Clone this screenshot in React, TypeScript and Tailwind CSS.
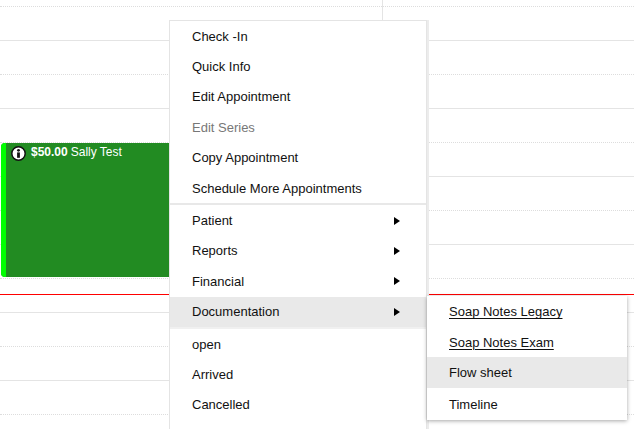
import React from "react";

const GridColumn = ({ className }: { className: string }) => (
  <div className={className}>
    <div className="h-[7px] border-b border-dotted border-[#dddddd]" />
    {Array.from({ length: 6 }).map((_, i) => (
      <React.Fragment key={i}>
        <div className="h-[34px] border-b border-[#e4e4e4]" />
        <div className="h-[34px] border-b border-dotted border-[#dddddd]" />
      </React.Fragment>
    ))}
  </div>
);

const Arrow = () => (
  <span className="h-0 w-0 border-y-[4px] border-l-[6px] border-y-transparent border-l-black" />
);

const Item = ({
  label,
  arrow,
  active,
  muted,
  underline,
  className = "h-[30.4px]",
}: {
  label: string;
  arrow?: boolean;
  active?: boolean;
  muted?: boolean;
  underline?: boolean;
  className?: string;
}) => (
  <div
    className={`flex items-center justify-between pl-[22px] pr-[26px] ${
      active ? "bg-[#e9e9e9]" : ""
    } ${muted ? "text-[#777777]" : "text-[#111111]"} ${className}`}
  >
    <span className={underline ? "underline underline-offset-2" : ""}>{label}</span>
    {arrow && <Arrow />}
  </div>
);

export default function App() {
  return (
    <div className="relative h-[429px] w-[634px] overflow-hidden bg-white font-['Liberation_Sans',Arial,sans-serif] text-[13px]">
      <div className="flex">
        <GridColumn className="w-[383px] border-r border-[#e4e4e4]" />
        <GridColumn className="flex-1" />
      </div>

      <div className="absolute left-0 top-[294px] h-[1px] w-full bg-[#ff0000]" />

      <div className="absolute left-[1px] top-[143px] flex h-[134px] w-[169px] overflow-hidden rounded-l-[4px] bg-[#228b22] text-[12px] leading-[14px] text-white">
        <div className="h-full w-[5px] bg-[#00ff00]" />
        <div className="flex h-[18px] items-center pl-[5px]">
          <svg width="15" height="15" viewBox="0 0 15 15" className="mt-[3px] shrink-0">
            <circle cx="7.5" cy="7.5" r="6.7" fill="#ffffff" stroke="#111111" strokeWidth="1.5" />
            <circle cx="7.5" cy="4.3" r="1.4" fill="#111111" />
            <rect x="6.1" y="6.4" width="2.8" height="5.4" fill="#111111" />
          </svg>
          <span className="ml-[5px] font-bold">$50.00</span>
          <span className="ml-[3px]">Sally Test</span>
        </div>
      </div>

      <div className="absolute left-[169px] top-[20px] h-[420px] w-[258px] border border-[#e4e4e4] bg-white shadow-[2px_0_0_#ececec]">
        <Item label="Check -In" className="h-[30.4px] pt-[1px]" />
        <Item label="Quick Info" />
        <Item label="Edit Appointment" />
        <Item label="Edit Series" muted />
        <Item label="Copy Appointment" />
        <Item label="Schedule More Appointments" className="h-[30.4px] pt-[1px]" />
        <div className="h-[2px] bg-[#e8e8e8]" />
        <Item label="Patient" arrow />
        <Item label="Reports" arrow />
        <Item label="Financial" arrow />
        <Item label="Documentation" arrow active />
        <div className="h-[2px] bg-[#f0f0f0]" />
        <Item label="open" className="h-[30.4px] pt-[1px]" />
        <Item label="Arrived" />
        <Item label="Cancelled" />
      </div>

      <div className="absolute left-[427px] top-[296px] w-[200px] bg-white shadow-[0_1px_4px_rgba(0,0,0,0.35)]">
        <Item label="Soap Notes Legacy" underline className="h-[31px] pt-[1px]" />
        <Item label="Soap Notes Exam" underline className="h-[30px] pt-[1px]" />
        <Item label="Flow sheet" active className="h-[31px] pt-[1px]" />
        <Item label="Timeline" className="h-[32px] pt-[1px]" />
      </div>
    </div>
  );
}
